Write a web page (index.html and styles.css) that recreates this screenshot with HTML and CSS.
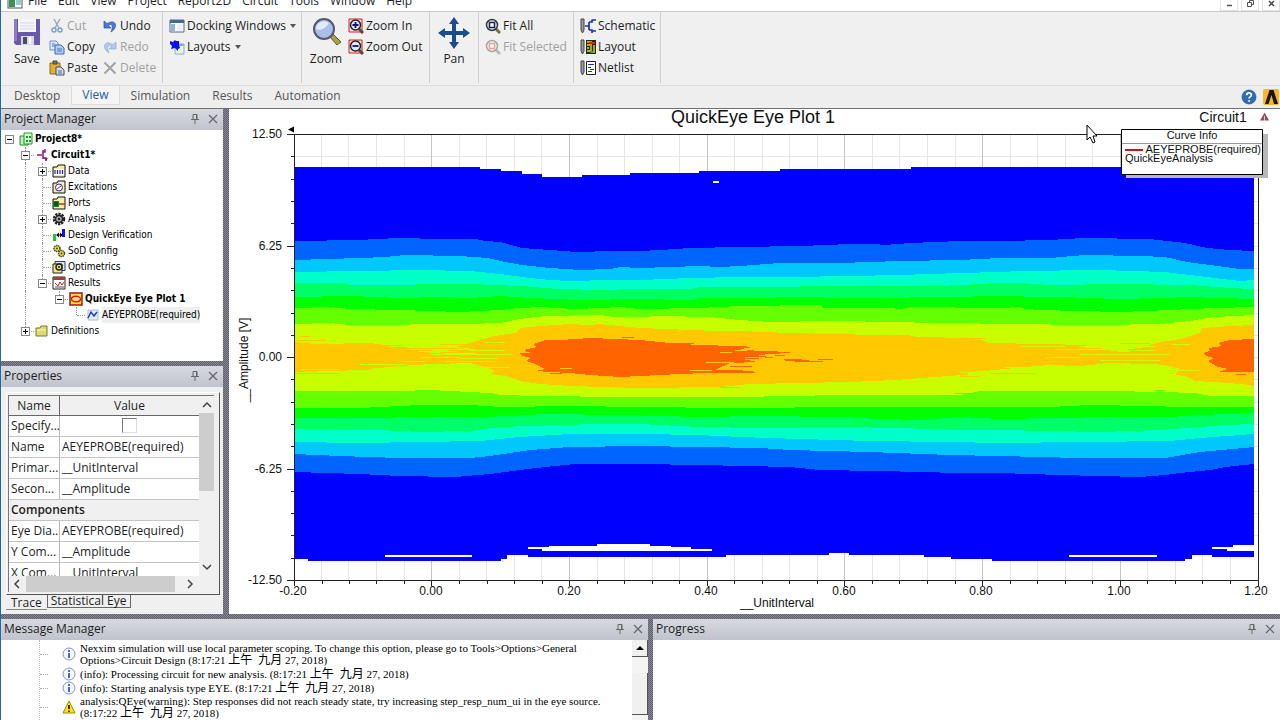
FILE: index.html
```html
<!DOCTYPE html>
<html lang="en">
<head>
<meta charset="utf-8">
<title>QuickEye Eye Plot 1</title>
<link rel="stylesheet" href="styles.css">
</head>
<body>
<svg width="0" height="0" class="defs" aria-hidden="true">
  <symbol id="pin" viewBox="0 0 12 12"><path d="M4 1.500h4v5H4zM2 6.500h8M6 7v4M7.500 2v4" fill="none" stroke="#666"/></symbol>
  <symbol id="close" viewBox="0 0 12 12"><path d="M2 2l8 8M10 2l-8 8" stroke="#666" stroke-width="1.200"/></symbol>
  <symbol id="info" viewBox="0 0 14 14"><circle cx="7" cy="7" r="6" fill="#f4f8ff" stroke="#8297c0"/><path d="M7 6v5M7 3v2" stroke="#2342b8" stroke-width="1.600"/></symbol>
  <symbol id="pen" viewBox="0 0 16 16"><path d="M1 1h3v11l-1.500 3L1 12z" fill="#999" stroke="#444"/></symbol>
  <symbol id="folder" viewBox="0 0 14 14"><path d="M1 3h4l1-2h7v12H1z" fill="#f4f0a8" stroke="#111"/></symbol>
</svg>
<div class="app">
  <header class="menubar">
    <svg class="app-icon" viewBox="0 0 16 16"><rect x="1" y="0" width="14" height="15" fill="#fff" stroke="#555"/><rect x="2" y="3" width="6" height="11" fill="#3d8f5c"/><rect x="9" y="3" width="5" height="9" fill="#9cc"/></svg>
    <nav class="menus">
      <button>File</button><button>Edit</button><button>View</button><button>Project</button><button>Report2D</button><button>Circuit</button><button>Tools</button><button>Window</button><button>Help</button>
    </nav>
    <div class="window-buttons">
      <button aria-label="Minimize"><svg viewBox="0 0 16 16"><path d="M6 12.500h5" stroke="#555" stroke-width="1.500"/></svg></button>
      <button aria-label="Restore"><svg viewBox="0 0 16 16"><path d="M5.500 9.500h4v4h-4zM7.500 9V7.500h4v4H10" fill="none" stroke="#555"/></svg></button>
      <button aria-label="Close"><svg viewBox="0 0 16 16"><path d="M6 8l5 5M11 8l-5 5" stroke="#444" stroke-width="1.500"/></svg></button>
    </div>
  </header>

  <div class="ribbon">
    <section class="group group-edit">
      <button class="big"><svg class="i28" viewBox="0 0 28 28"><path d="M1 1h26v26H3l-2-2z" fill="#6c58a8"/><path d="M5 1h18v13H5z" fill="#f6f6fa"/><path d="M7 5h14M7 8h14M7 11h14" stroke="#d5d5dd"/><path d="M1 1h3v22H1z" fill="#8c7cc0"/><path d="M8 18h13v9H8z" fill="#d9d9e2"/><path d="M10 19h4v7h-4z" fill="#4a4a78"/><path d="M16 19h2v7h-2z" fill="#fff"/></svg><span>Save</span></button>
      <div class="stack stack-a">
        <button class="cmd" disabled><svg class="i16" viewBox="0 0 16 16"><path d="M5 1l5 9M11 1L6 10" stroke="#9aa9bd" stroke-width="1.500"/><circle cx="5" cy="12" r="2" fill="none" stroke="#7f9fd0" stroke-width="1.500"/><circle cx="11" cy="12" r="2" fill="none" stroke="#7f9fd0" stroke-width="1.500"/></svg>Cut</button>
        <button class="cmd"><svg class="i16" viewBox="0 0 16 16"><path d="M1 2h6l2 2v7H1z" fill="#dfe9fa" stroke="#6d8fc9"/><path d="M6 6h6l3 3v6H6z" fill="#b4cdf2" stroke="#3f66ad"/><path d="M8 10h5M8 12h5M3 5h3M3 7h3" stroke="#4a74bd"/></svg>Copy</button>
        <button class="cmd"><svg class="i16" viewBox="0 0 16 16"><path d="M1 3h10v11H1z" fill="#e0b030" stroke="#8a6a20"/><path d="M4 1h4v3H4z" fill="#777" stroke="#444"/><path d="M7 7h5l3 3v5H7z" fill="#cfdcf0" stroke="#444f70"/><path d="M9 11h4M9 13h4" stroke="#667"/></svg>Paste</button>
      </div>
      <div class="stack">
        <button class="cmd"><svg class="i16" viewBox="0 0 16 16"><path d="M2 3v7h7L6.500 7.500C9 5 12 7 9 14c7-4 6-14-4-8.500z" fill="#4a7ad6" stroke="#274f9e" stroke-width=".7"/></svg>Undo</button>
        <button class="cmd" disabled><svg class="i16" viewBox="0 0 16 16"><path d="M14 3v7H7l2.500-2.500C7 5 4 7 7 14 0 10 1 0 11 5.500z" fill="#b4c9e8" stroke="#91abd0" stroke-width=".7"/></svg>Redo</button>
        <button class="cmd" disabled><svg class="i16" viewBox="0 0 16 16"><path d="M2.500 2.500l11 11M13.500 2.500l-11 11" stroke="#a2a2a2" stroke-width="2"/></svg>Delete</button>
      </div>
    </section>
    <section class="group group-windows">
      <div class="stack">
        <button class="cmd"><svg class="i16" viewBox="0 0 16 16"><path d="M1 2h14v12H1z" fill="#fff" stroke="#546a80"/><path d="M1 2h14v3H1z" fill="#3f6a94"/><path d="M2 6h4v7H2z" fill="#8db4dc"/><path d="M8 6h6v7H8z" fill="#e9f0f6"/></svg>Docking Windows<i class="drop"></i></button>
        <button class="cmd"><svg class="i16" viewBox="0 0 16 16"><path d="M6 5h9v10H6z" fill="#e8f0fa" stroke="#9ab"/><path d="M6 5h9v2H6z" fill="#7fb0d8"/><path d="M1 2l3 1 2-2 1 1h3v4l1 3-2 1v2L6 9 2 10l1-3-2-2z" fill="#0a10f0"/></svg>Layouts<i class="drop"></i></button>
      </div>
    </section>
    <section class="group group-zoom">
      <button class="big"><svg class="i32" viewBox="0 0 32 32"><path d="M20 20l7 8 4-3-8-8z" fill="#a8a04c" stroke="#5e5a30"/><circle cx="14" cy="12" r="10" fill="#a9c0ec" stroke="#55586a" stroke-width="2"/><path d="M6 12a8 8 0 0 1 13-6C15 12 11 14 6 12z" fill="#e2ebfb"/></svg><span>Zoom</span></button>
      <div class="stack">
        <button class="cmd"><svg class="i16" viewBox="0 0 16 16"><path d="M1 1h13v13H1z" fill="#f4dfe0" stroke="#c22"/><path d="M11 11l4 4" stroke="#554f30" stroke-width="3"/><circle cx="7.500" cy="7" r="5" fill="#e4e8ff" stroke="#222" stroke-width="1.500"/><path d="M4.500 7h6M7.500 4v6" stroke="#118" stroke-width="1.800"/></svg>Zoom In</button>
        <button class="cmd"><svg class="i16" viewBox="0 0 16 16"><path d="M1 1h13v13H1z" fill="#f4dfe0" stroke="#c22"/><path d="M11 11l4 4" stroke="#554f30" stroke-width="3"/><circle cx="7.500" cy="7" r="5" fill="#e4e8ff" stroke="#222" stroke-width="1.500"/><path d="M4.500 7h6" stroke="#118" stroke-width="1.800"/></svg>Zoom Out</button>
      </div>
    </section>
    <section class="group group-pan">
      <button class="big"><svg class="i32" viewBox="0 0 32 32"><path d="M16 0l5 7h-3v7h7v-3l7 5-7 5v-3h-7v7h3l-5 7-5-7h3v-7H7v3l-7-5 7-5v3h7V7h-3z" fill="#1b4d8c"/></svg><span>Pan</span></button>
    </section>
    <section class="group group-fit">
      <div class="stack">
        <button class="cmd"><svg class="i16" viewBox="0 0 16 16"><path d="M10 10l5 5" stroke="#77703c" stroke-width="3"/><circle cx="7" cy="7" r="5.500" fill="#dfe6f6" stroke="#333a4a" stroke-width="1.500"/><path d="M4.500 4.500h5v5h-5z" fill="#fff" stroke="#224" stroke-width="1.500"/></svg>Fit All</button>
        <button class="cmd" disabled><svg class="i16" viewBox="0 0 16 16"><path d="M10 10l5 5" stroke="#bbb" stroke-width="3"/><circle cx="7" cy="7" r="5.500" fill="#f1f1f1" stroke="#a5a5a5" stroke-width="1.500"/><path d="M4.500 4.500h5v5h-5z" fill="#fff" stroke="#e6a0a0" stroke-width="1.500"/></svg>Fit Selected</button>
      </div>
    </section>
    <section class="group group-views">
      <div class="stack">
        <button class="cmd"><svg class="i16" viewBox="0 0 16 16"><use href="#pen"/><path d="M5 8h4M9 4v8M9 4h3V1.500M9 12h3v3M12 2h4M12 13h4" fill="none" stroke="#2030b0" stroke-width="1.700"/></svg>Schematic</button>
        <button class="cmd"><svg class="i16" viewBox="0 0 16 16"><path d="M6 1h10v14H6z" fill="#222a10"/><path d="M7 3h3M7 6h3M7 9h2M7 12h4" stroke="#f0e020" stroke-width="1.500"/><path d="M11 2v12M14 6v8" stroke="#d8d020" stroke-width="1.500"/><path d="M9 3h6v2H9z" fill="#e02020"/><path d="M10 12h3v2h-3z" fill="#20b020"/><use href="#pen"/></svg>Layout</button>
        <button class="cmd"><svg class="i16" viewBox="0 0 16 16"><path d="M6.500 1.500h9v13h-9z" fill="#fff" stroke="#223"/><path d="M8 4.500h6M8 7.500h3M10 9.500h4M8 11.500h4" stroke="#2030b0"/><use href="#pen"/></svg>Netlist</button>
      </div>
    </section>
  </div>

  <div class="tabrow">
    <nav class="tabs">
      <button>Desktop</button><button class="active">View</button><button>Simulation</button><button>Results</button><button>Automation</button>
    </nav>
    <div class="tabrow-icons">
      <svg class="i16" viewBox="0 0 16 16"><circle cx="8" cy="8" r="7" fill="#2f6db5" stroke="#1f4f8a" stroke-width=".7"/><path d="M5.700 6.200c0-3 4.700-3 4.700-.2 0 1.700-2.300 1.700-2.300 3.500M8.100 11v1.700" fill="none" stroke="#fff" stroke-width="1.700"/></svg>
      <svg class="i16" viewBox="0 0 16 16"><rect x="0" y="0" width="16" height="16" rx="2" fill="#f6b81c"/><path d="M2 15L6.500 1h4L15 15h-4L8.500 6 5.500 15z" fill="#151515"/></svg>
    </div>
  </div>

  <main class="work">
    <aside class="side">
      <section class="project">
        <header class="panel-head"><h2>Project Manager</h2>
          <button aria-label="Pin"><svg class="i12"><use href="#pin"/></svg></button>
          <button aria-label="Close"><svg class="i12"><use href="#close"/></svg></button>
        </header>
        <ul class="tree">
          <li><b class="cell"><i class="box"></i></b><svg class="ti" viewBox="0 0 14 14"><path d="M1 4h8v9H1z" fill="#bff0bf" stroke="#179a2a"/><path d="M5 1h8v11H5z" fill="#d9f8d9" stroke="#179a2a"/><path d="M7 4h2v2H7zM10 4h2v2h-2zM7 8h2v2H7zM10 8h2v2h-2z" fill="#179a2a"/></svg><strong>Project8*</strong></li>
          <li><b class="cell gap"></b><b class="cell line"><i class="box"></i></b><svg class="ti" viewBox="0 0 14 14"><path d="M2 7h5M8 2v9M10 1v3H8M8 10h3v3" fill="none" stroke="#8a1a8a" stroke-width="1.500"/><path d="M9 10h4l-2 3z" fill="#8a1a8a"/></svg><strong>Circuit1*</strong></li>
          <li><b class="cell gap"></b><b class="cell v"></b><b class="cell line"><i class="box plus"></i></b><svg class="ti" viewBox="0 0 14 14"><use href="#folder"/><path d="M2 5h10v6H2z" fill="#fff"/><path d="M3 6v4M5.500 6v4M8 6v4M10.500 6v4" stroke="#22c" stroke-width="1.200"/></svg><span>Data</span></li>
          <li><b class="cell gap"></b><b class="cell v"></b><b class="cell line"></b><svg class="ti" viewBox="0 0 14 14"><use href="#folder"/><circle cx="7" cy="7.500" r="3.500" fill="#fff" stroke="#22c"/><path d="M5 9l4-3" stroke="#c22"/></svg><span>Excitations</span></li>
          <li><b class="cell gap"></b><b class="cell v"></b><b class="cell line"></b><svg class="ti" viewBox="0 0 14 14"><use href="#folder"/><path d="M1 5h6v6H1z" fill="#108a20"/><path d="M3 6v4M5 6v4" stroke="#021"/><path d="M7 8h6" stroke="#d22" stroke-width="1.500"/></svg><span>Ports</span></li>
          <li><b class="cell gap"></b><b class="cell v"></b><b class="cell line"><i class="box plus"></i></b><svg class="ti" viewBox="0 0 14 14"><circle cx="7" cy="7" r="5" fill="none" stroke="#222" stroke-width="2.500" stroke-dasharray="2.200 1"/><circle cx="7" cy="7" r="3.500" fill="#aaa" stroke="#222" stroke-width="1.500"/><circle cx="7" cy="7" r="1.200" fill="#222"/></svg><span>Analysis</span></li>
          <li><b class="cell gap"></b><b class="cell v"></b><b class="cell line"></b><svg class="ti" viewBox="0 0 14 14"><path d="M1 6h3v7H1z" fill="#1bc83a"/><path d="M10 1h3v8h-3z" fill="#1212e0"/><path d="M4 7l3-2.500v5zM11 7L8 4.500v5z" fill="#111"/><path d="M5 7h5" stroke="#111"/></svg><span>Design Verification</span></li>
          <li><b class="cell gap"></b><b class="cell v"></b><b class="cell line"></b><svg class="ti" viewBox="0 0 14 14"><circle cx="5" cy="4.500" r="3" fill="#ece63a" stroke="#443" stroke-width="1.500" stroke-dasharray="1.500 .6"/><circle cx="9.500" cy="9.500" r="3" fill="#ece63a" stroke="#443" stroke-width="1.500" stroke-dasharray="1.500 .6"/><circle cx="5" cy="4.500" r="1" fill="#443"/><circle cx="9.500" cy="9.500" r="1" fill="#443"/></svg><span>SoD Config</span></li>
          <li><b class="cell gap"></b><b class="cell v"></b><b class="cell line"></b><svg class="ti" viewBox="0 0 14 14"><path d="M3 1.500h10v9H3z" fill="#dde6ff" stroke="#223a9a"/><path d="M1 4h9v9H1z" fill="#f2ee70" stroke="#222"/><circle cx="7" cy="7" r="3" fill="#ece63a" stroke="#222" stroke-width="1.500"/><circle cx="7" cy="7" r="1" fill="#222"/></svg><span>Optimetrics</span></li>
          <li><b class="cell gap"></b><b class="cell v"></b><b class="cell line end"><i class="box"></i></b><svg class="ti" viewBox="0 0 14 14"><path d="M1 1h12v12H1z" fill="#fff" stroke="#222"/><path d="M1 1h12v3H1z" fill="#b33"/><path d="M3 7l3 3 2-4 2 3 2-3" fill="none" stroke="#d22"/><path d="M3 11h9" stroke="#555"/></svg><span>Results</span></li>
          <li><b class="cell gap"></b><b class="cell v"></b><b class="cell"></b><b class="cell line end"><i class="box"></i></b><svg class="ti" viewBox="0 0 14 14"><path d="M1 1h12v12H1z" fill="#f8e838" stroke="#a31616" stroke-width="1.500"/><ellipse cx="7" cy="7" rx="4.500" ry="2.800" fill="#ffd27a" stroke="#d21c1c" stroke-width="1.400"/></svg><strong>QuickEye Eye Plot 1</strong></li>
          <li><b class="cell gap"></b><b class="cell v"></b><b class="cell"></b><b class="cell"></b><b class="cell line end"></b><svg class="ti" viewBox="0 0 14 14"><path d="M2 2h10v10H2z" fill="#e4eefc" stroke="#a9bdd8"/><path d="M2 10l3-6 3 4 3-4" fill="none" stroke="#1c38c0" stroke-width="1.400"/></svg><span class="selected">AEYEPROBE(required)</span></li>
          <li><b class="cell gap"></b><b class="cell line end"><i class="box plus"></i></b><svg class="ti" viewBox="0 0 14 14"><path d="M1 4h4l1-2h6v10H1z" fill="#dcdc6c" stroke="#77772c"/><path d="M2 6h9" stroke="#f8f8c0"/></svg><span>Definitions</span></li>
        </ul>
      </section>
      <div class="split-h"></div>
      <section class="properties">
        <header class="panel-head"><h2>Properties</h2>
          <button aria-label="Pin"><svg class="i12"><use href="#pin"/></svg></button>
          <button aria-label="Close"><svg class="i12"><use href="#close"/></svg></button>
        </header>
        <div class="prop-frame">
          <div class="prop-grid">
            <div class="prop-view">
              <table>
                <thead><tr><th>Name</th><th>Value</th></tr></thead>
                <tbody>
                  <tr><td><label for="specify">Specify...</label></td><td class="center"><input id="specify" type="checkbox"></td></tr>
                  <tr><td>Name</td><td>AEYEPROBE(required)</td></tr>
                  <tr><td>Primar...</td><td>__UnitInterval</td></tr>
                  <tr><td>Secon...</td><td>__Amplitude</td></tr>
                  <tr><th colspan="2" class="section">Components</th></tr>
                  <tr><td>Eye Dia...</td><td>AEYEPROBE(required)</td></tr>
                  <tr><td>Y Com...</td><td>__Amplitude</td></tr>
                  <tr><td>X Com...</td><td>__UnitInterval</td></tr>
                </tbody>
              </table>
            </div>
            <div class="vbar"><svg class="i12" viewBox="0 0 12 12"><path d="M2 8l4-4 4 4" fill="none" stroke="#444" stroke-width="1.500"/></svg><i class="vthumb"></i><svg class="i12" viewBox="0 0 12 12"><path d="M2 4l4 4 4-4" fill="none" stroke="#444" stroke-width="1.500"/></svg></div>
            <div class="hbar"><svg class="i12" viewBox="0 0 12 12"><path d="M8 2L4 6l4 4" fill="none" stroke="#444" stroke-width="1.500"/></svg><i class="hthumb"></i><svg class="i12" viewBox="0 0 12 12"><path d="M4 2l4 4-4 4" fill="none" stroke="#444" stroke-width="1.500"/></svg></div>
          </div>
        </div>
        <nav class="sheet-tabs"><button>Trace</button><button class="boxed">Statistical Eye</button></nav>
      </section>
    </aside>
    <div class="split-v wide"></div>
    <section class="plot">
      <svg class="chart" viewBox="229 109 1051 505" role="img" aria-label="QuickEye Eye Plot 1">
        <g class="grid">
          <path class="minor" d="M294 156.500H1258M321.500 135V580M348.500 135V580M376.500 135V580M404.500 135V580M459.500 135V580M486.500 135V580M514.500 135V580M541.500 135V580M597.500 135V580M624.500 135V580M652.500 135V580M679.500 135V580M734.500 135V580M762.500 135V580M789.500 135V580M817.500 135V580M872.500 135V580M899.500 135V580M927.500 135V580M955.500 135V580M1010.500 135V580M1037.500 135V580M1065.500 135V580M1092.500 135V580M1147.500 135V580M1175.500 135V580M1202.500 135V580M1230.500 135V580M1254 179.500h4M1254 201.500h4M1254 223.500h4M1254 246.500h4M1254 268.500h4M1254 290.500h4M1254 313.500h4M1254 335.500h4M1254 357.500h4M1254 379.500h4M1254 402.500h4M1254 424.500h4M1254 446.500h4M1254 469.500h4M1254 491.500h4M1254 513.500h4M1254 535.500h4"/>
          <path class="major" d="M431.500 135V580M569.500 135V580M707.500 135V580M844.500 135V580M982.500 135V580M1120.500 135V580"/>
        </g>
        <g class="bands">
          <path fill="#0000ff" d="M294 167H480V169H501V171H522V174H542V177H582V175H630V173H699V171H780V169H911V167H1168V169H1190V171H1209V174H1226V177H1254V557H1212V555H1192V559H1185V561H992V559H951V557H924V555H849V553H829V555H726V557H528V555H507V559H501V561H308V559H294Z"/>
          <path fill="#0064ff" d="M294 241L360 240 375 239 400 238 440 239 475 239 485 241 500 242 515 246 522 248 550 250 577 252 613 251 640 251 660 250 690 248 740 247 800 246 850 244 875 244 885 245 910 243 960 241 1000 241 1050 240 1083 238 1150 239 1185 243 1207 248 1230 250 1254 251V464L1225 467 1210 470 1180 473 1165 475 1140 477 1060 475 1000 473 960 473 880 471 820 470 790 467 700 465 640 464 575 464 545 467 520 470 490 474 455 477 400 476 360 474 294 472Z"/>
          <path fill="#00c8ff" d="M294 260L360 258 385 257 405 255 460 256 488 258 505 262 522 265 550 268 580 270 610 269 620 267 640 268 700 266 720 267 740 266 780 263 840 263 900 261 960 260 1000 258 1050 258 1085 255 1140 256 1165 257 1187 262 1210 265 1240 269 1254 269V447L1200 452 1165 458 1080 458 1000 456 950 455 870 452 790 450 760 448 700 447 640 446 570 447 530 450 490 456 470 458 400 458 340 456 294 454Z"/>
          <path fill="#00ffc8" d="M294 272L360 271 420 270 470 271 500 274 530 278 550 280 570 281 610 280 640 280 690 278 740 277 790 277 850 276 900 275 960 273 1000 272 1020 271 1100 270 1165 272 1190 275 1215 278 1240 281 1254 280V434L1200 438 1170 441 1000 443 950 442 870 441 800 439 740 437 700 435 640 434 570 434 520 437 480 441 360 443 294 442Z"/>
          <path fill="#00ff64" d="M294 283L345 283 350 285 400 285 430 284 470 284 520 286 560 289 600 290 640 289 690 289 700 287 760 287 840 286 940 286 1000 283 1020 283 1050 285 1120 284 1190 285 1230 288 1254 289V424L1225 425 1200 427 1160 430 1100 432 1000 430 960 430 900 428 840 427 760 428 700 427 640 424 600 424 560 425 500 427 470 431 420 432 380 430 294 429Z"/>
          <path fill="#00ff00" d="M294 297L350 296 400 298 440 297 470 298 500 296 530 298 580 300 640 299 690 300 700 298 760 298 790 297 860 298 960 297 985 296 1060 297 1120 299 1160 298 1190 297 1254 299V413L1200 415 1170 417 1110 417 1060 418 1000 419 960 417 920 420 880 419 840 417 760 416 700 417 620 415 545 414 510 416 480 417 420 417 370 418 294 418Z"/>
          <path fill="#64ff00" d="M294 308L330 307 350 309 400 310 460 312 500 310 520 308 540 307 575 309 600 308 620 307 640 309 700 308 740 306 820 305 824 308 890 308 900 309 910 307 1000 308 1020 307 1025 309 1040 310 1120 312 1170 310 1215 308 1254 307V407L1180 407 1150 406 1090 405 1050 407 960 407 860 407 730 408 640 407 570 406 500 407 470 405 420 405 360 408 294 408Z"/>
          <path fill="#c8ff00" d="M294 324L330 323 350 325 470 324 500 323 520 319 545 316 600 315 615 317 640 317 660 316 710 317 740 320 770 322 830 321 860 321 870 322 960 323 1000 324 1100 325 1160 324 1190 321 1215 317 1254 315V396L1210 396 1195 393 1160 392 1110 391 1000 391 980 391 960 395 870 395 840 395 790 396 740 397 690 397 620 397 540 396 500 395 490 393 470 392 430 390 400 391 294 391Z"/>
          <path fill="#ffc800" d="M294 342L315 344 370 343 385 345 420 346 400 347 440 350 410 352 450 353 425 355 480 354 445 350 475 349 455 347 470 343 478 340 500 335 515 333 520 328 540 326 570 324 590 325 600 324 640 328 690 330 720 331 740 331 790 333 840 334 900 336 960 338 980 340 990 343 1040 344 1090 345 1075 347 1110 349 1120 352 1095 352 1135 353 1125 350 1145 347 1155 343 1180 339 1200 333 1202 328 1230 326 1254 325V386L1240 384 1215 382 1195 381 1185 376 1175 375 1180 369 1168 366 1155 364 1105 363 1100 364 1080 366 1050 365 1025 367 995 370 960 373 975 374 935 377 895 380 850 382 750 384 720 387 640 388 570 386 540 384 520 381 505 376 490 374 495 371 485 367 470 363 430 364 400 366 380 368 340 371 294 372Z"/>
          <path fill="#ff6400" d="M519 353L527 352 524 350 537 347 533 344 545 340 560 340 590 338 640 340 670 343 695 343 690 345 745 346 752 348 735 349 760 351 795 352 775 354 755 355 776 358 742 359 758 362 730 363 715 370 770 371 705 373 680 374 640 376 620 377 590 375 570 373 550 372 535 371 545 369 533 363 526 361 531 358 523 356Z"/>
          <path fill="#ff6400" d="M1203 353L1210 351 1209 348 1222 346 1218 343 1230 340 1254 339V372H1218L1228 369 1218 367 1208 361 1214 358 1206 356Z"/>
        </g>
        <g class="streaks">
          <path stroke="#c8ff00" d="M390 346h50M410 349h65M420 357h40M445 361h50M400 361h25M432 354h80M470 350h35M460 358h38M300 369h60M360 364h45M960 372h40M1020 346h45M1055 349h60M1080 354h90M1045 357h35M1110 350h45M1100 360h60M1120 346h35M1005 367h40M480 367h30M1175 370h24M485 342h20M1172 344h18"/>
          <path stroke="#ffc800" d="M300 336h10M296 340h30M380 348h80M440 352h90M400 356h70M425 359h80M294 373h45M340 369h30M885 335h25M965 338h20M720 387h20M990 373h45M1000 348h90M1070 352h90M1090 358h70M440 344h30M1120 343h30M960 376h20"/>
          <path stroke="#ff6400" d="M775 355h10M784 359h18M795 361h28M818 359h15M785 360h24M622 337h12M550 373h12M1236 374h10M730 366h22M700 372h55"/>
          <path stroke="#ffc800" d="M560 368h12M720 352h12M706 362h28M745 357h20M690 370h22M735 350h12"/>
          <path stroke="#64ff00" d="M955 393h26M326 391h20M1155 390h10M685 405h10M738 406h10"/>
        </g>
        <g fill="#fff">
          <path d="M385 555H472V557H385ZM1069 555H1157V557H1069ZM713 181H719V183H713Z"/>
          <path d="M528 547H549V546H597V544H650V546H671V547H691V549H712V551H542V549H528Z"/>
          <path d="M1212 547H1233V545H1254V551H1227V549H1212Z"/>
        </g>
        <path class="axis" d="M287 134.500H1258.500V586M287 580.500H1258.500M294.500 134V586M287 246.500h7M287 357.500h7M287 469.500h7M291 156.500h3M291 179.500h3M291 201.500h3M291 223.500h3M291 268.500h3M291 290.500h3M291 313.500h3M291 335.500h3M291 379.500h3M291 402.500h3M291 424.500h3M291 446.500h3M291 491.500h3M291 513.500h3M291 535.500h3M291 558.500h3M322.500 580v4M349.500 580v4M376.500 580v4M404.500 580v4M431.500 580v6M459.500 580v4M487.500 580v4M514.500 580v4M542.500 580v4M569.500 580v6M597.500 580v4M624.500 580v4M652.500 580v4M679.500 580v4M707.500 580v6M734.500 580v4M762.500 580v4M789.500 580v4M817.500 580v4M844.500 580v6M872.500 580v4M899.500 580v4M927.500 580v4M955.500 580v4M982.500 580v6M1010.500 580v4M1037.500 580v4M1065.500 580v4M1092.500 580v4M1120.500 580v6M1147.500 580v4M1175.500 580v4M1202.500 580v4M1230.500 580v4"/>
        <path d="M288 129.500l6-3v6z" fill="#000"/>
        <g class="tick" text-anchor="end"><text x="282" y="138">12.50</text><text x="282" y="250">6.25</text><text x="282" y="361">0.00</text><text x="282" y="473">-6.25</text><text x="282" y="584">-12.50</text></g>
        <g class="tick" text-anchor="middle"><text x="293" y="595">-0.20</text><text x="431" y="595">0.00</text><text x="569" y="595">0.20</text><text x="706" y="595">0.40</text><text x="844" y="595">0.60</text><text x="981" y="595">0.80</text><text x="1119" y="595">1.00</text><text x="1256" y="595">1.20</text><text x="777" y="607">__UnitInterval</text><text transform="translate(248 360) rotate(-90)">__Amplitude [V]</text></g>
        <text class="title" x="753" y="123" text-anchor="middle">QuickEye Eye Plot 1</text>
        <text class="design" x="1223" y="122" text-anchor="middle">Circuit1</text>
        <path d="M1260 120.500l4.500-8 4.500 8z" fill="#a04a50"/><path d="M1264.500 116v5" stroke="#e8c8c8"/>
        <g class="legend">
          <path d="M1126 134h142v44h-142z" fill="#b8b8b8"/>
          <path d="M1121.500 129.500h141v45h-141z" fill="#fff" stroke="#000"/>
          <path d="M1122 143.500h140" stroke="#999"/>
          <path d="M1125 150h18" stroke="#c81414" stroke-width="2"/>
          <text x="1192" y="139" text-anchor="middle">Curve Info</text>
          <text x="1261" y="153" text-anchor="end">AEYEPROBE(required)</text>
          <text x="1125" y="162">QuickEyeAnalysis</text>
        </g>
        <path d="M1087 125v15l3-3 3 6 2-1-2-6h4z" fill="#fff" stroke="#000"/>
      </svg>
    </section>
  </main>
  <div class="split-h"></div>
  <footer class="bottom">
    <section class="messages">
      <header class="panel-head"><h2>Message Manager</h2>
        <button aria-label="Pin"><svg class="i12"><use href="#pin"/></svg></button>
        <button aria-label="Close"><svg class="i12"><use href="#close"/></svg></button>
      </header>
      <div class="msg-body">
        <ul class="msg-list">
          <li class="two"><svg class="i14"><use href="#info"/></svg><p>Nexxim simulation will use local parameter scoping. To change this option, please go to Tools&gt;Options&gt;General<br>Options&gt;Circuit Design (8:17:21 <span lang="zh-TW">上午&nbsp; 九月</span> 27, 2018)</p></li>
          <li><svg class="i14"><use href="#info"/></svg><p>(info): Processing circuit for new analysis. (8:17:21 <span lang="zh-TW">上午&nbsp; 九月</span> 27, 2018)</p></li>
          <li><svg class="i14"><use href="#info"/></svg><p>(info): Starting analysis type EYE. (8:17:21 <span lang="zh-TW">上午&nbsp; 九月</span> 27, 2018)</p></li>
          <li class="two"><svg class="i14" viewBox="0 0 14 14"><path d="M7 1l6 12H1z" fill="#ffe21a" stroke="#a08a10"/><path d="M7 5v4M7 10.500v1.500" stroke="#111" stroke-width="1.600"/></svg><p>analysis:QEye(warning): Step responses did not reach steady state, try increasing step_resp_num_ui in the eye source.<br>(8:17:22 <span lang="zh-TW">上午&nbsp; 九月</span> 27, 2018)</p></li>
        </ul>
        <div class="msg-bar"><button aria-label="Scroll up"><svg class="i12" viewBox="0 0 12 12"><path d="M2 8l4-4 4 4z" fill="#000"/></svg></button><i></i><b></b></div>
      </div>
    </section>
    <div class="split-v"></div>
    <section class="progress">
      <header class="panel-head"><h2>Progress</h2>
        <button aria-label="Pin"><svg class="i12"><use href="#pin"/></svg></button>
        <button aria-label="Close"><svg class="i12"><use href="#close"/></svg></button>
      </header>
    </section>
  </footer>
</div>
</body>
</html>
```
FILE: styles.css
```css
* { box-sizing: border-box; }
html, body { height: 100%; }
body {
  margin: 0;
  overflow: hidden;
  background: #fff;
  color: #1e1e1e;
  font: 12px/16px "Open Sans", "Noto Sans", sans-serif;
}
button {
  margin: 0;
  padding: 0;
  border: 0;
  background: none;
  color: inherit;
  font: inherit;
  white-space: nowrap;
}
svg { display: block; flex: none; }
.defs { position: absolute; }
ul, p, h2 { margin: 0; padding: 0; list-style: none; }
.i12 { width: 12px; height: 12px; }
.i14 { width: 14px; height: 14px; }
.i16 { width: 16px; height: 16px; }
.i28 { width: 28px; height: 28px; }
.i32 { width: 32px; height: 32px; }

.app {
  display: flex;
  flex-direction: column;
  height: 100vh;
  border-left: 1px solid #1f6aa5;
}

.menubar {
  display: flex;
  align-items: center;
  flex: none;
  height: 22px;
  margin-top: -10px;
  padding-left: 6px;
  background: #fff;
  border-bottom: 1px solid #c8c8c8;
}
.app-icon { width: 16px; height: 16px; margin-right: 5px; }
.menus { display: flex; flex: 1; gap: 11px; }
.window-buttons { display: flex; align-self: stretch; gap: 3px; }
.window-buttons svg { width: 16px; height: 16px; }
.window-buttons button { border: 1px solid #e4e4e4; }

.ribbon {
  display: flex;
  flex: none;
  height: 74px;
  padding-left: 2px;
  background: #f0f0f1;
  border-bottom: 1px solid #dcdcdc;
}
.group {
  display: flex;
  align-items: flex-start;
  margin-bottom: 2px;
  padding: 3px 0 0 8px;
  border-right: 1px solid #cfcfd2;
}
.group-edit { width: 160px; }
.group-windows { width: 139px; padding-left: 6px; }
.group-zoom { width: 128px; }
.group-pan { width: 49px; }
.group-fit { width: 95px; padding-left: 6px; }
.group-views { width: 87px; padding-left: 6px; }
.big {
  display: flex;
  flex-direction: column;
  align-items: center;
  justify-content: space-between;
  width: 32px;
  height: 50px;
  margin-top: 2px;
}
.big .i28 { margin-top: 1px; }
.stack { display: flex; flex-direction: column; }
.stack-a { width: 53px; }
.group-edit .stack-a { margin-left: 6px; }
.group-zoom .stack { margin-left: 6px; }
.cmd { display: flex; align-items: center; gap: 2px; height: 21px; }
.cmd:disabled { color: #a0a0a0; }
.drop {
  margin-left: 2px;
  border: 3px solid transparent;
  border-top: 4px solid #555;
  border-bottom: 0;
}

.tabrow {
  display: flex;
  flex: none;
  justify-content: space-between;
  height: 23px;
  background: #eeeeef;
  border-bottom: 1px solid #707070;
  color: #555;
}
.tabs { display: flex; height: 19px; padding-left: 2px; }
.tabs button { padding: 0 11px; }
.tabs .active { background: #f5f5f6; border: 1px solid #dcdcdc; border-top: 0; color: #2560a0; padding: 0 10px; }
.tabrow-icons { display: flex; gap: 6px; padding: 3px 1px 0 0; }

.work { display: flex; flex: 1; min-height: 0; }
.side { display: flex; flex-direction: column; flex: none; width: 222px; }
.split-v, .split-h {
  flex: none;
  background: repeating-conic-gradient(#5e5e6a 0 25%, #8a8a96 0 50%) 0 0 / 2px 2px;
}
.split-v { width: 5px; }
.split-v.wide { width: 6px; }
.split-h { height: 5px; }

.panel-head {
  display: flex;
  align-items: center;
  flex: none;
  gap: 6px;
  height: 21px;
  padding: 0 4px 2px 3px;
  background: linear-gradient(#d8dae2, #c0c3cc);
}
.panel-head h2 { flex: 1; font-size: 12px; font-weight: 400; }

.project { flex: none; height: 252px; }
.tree {
  padding-top: 1px;
  font: 10px/16px "DejaVu Sans Condensed", "DejaVu Sans", sans-serif;
}
.tree li { display: flex; align-items: center; height: 16px; color: #000; }
.cell { position: relative; flex: none; width: 17px; height: 16px; }
.cell.gap { width: 16px; }
.v::before, .line::before {
  content: "";
  position: absolute;
  left: 8px;
  top: 0;
  bottom: 0;
  border-left: 1px dotted #999;
}
.end::before { bottom: 8px; }
.line::after {
  content: "";
  position: absolute;
  left: 9px;
  right: 0;
  top: 8px;
  border-top: 1px dotted #999;
}
.box {
  position: absolute;
  left: 4px;
  top: 4px;
  z-index: 1;
  width: 9px;
  height: 9px;
  border: 1px solid #888;
  background: linear-gradient(#000, #000) center / 5px 1px no-repeat #fff;
}
.plus {
  background: linear-gradient(#000, #000) center / 5px 1px no-repeat, linear-gradient(#000, #000) center / 1px 5px no-repeat #fff;
}
.ti { width: 14px; height: 14px; margin: 0 2px 0 1px; }
.selected { background: #efefef; }

.properties { display: flex; flex: 1; flex-direction: column; min-height: 0; background: #f0f0f0; }
.prop-frame {
  flex: 1;
  min-height: 0;
  margin: 5px 3px 0 5px;
  padding: 2px 5px 2px 1px;
  border: 1px solid #fff;
  border-right: 1px solid #555;
  border-bottom: 1px solid #555;
}
.prop-grid {
  display: grid;
  grid-template: minmax(0, 1fr) 16px / minmax(0, 1fr) 15px;
  height: 100%;
  border: 1px solid #777;
  border-right: 0;
  border-bottom: 0;
}
.prop-view { overflow: hidden; background: #fff; }
table { width: 100%; border-collapse: separate; border-spacing: 0; table-layout: fixed; line-height: 15px; }
th, td {
  height: 21px;
  padding: 0 2px 1px;
  border-bottom: 1px solid #c4c4c4;
  text-align: left;
  font-weight: 400;
  white-space: nowrap;
  overflow: hidden;
}
th:first-child, td:first-child { width: 51px; border-right: 1px solid #bbb; }
thead th, thead th:first-child { height: 20px; background: #f0f0f0; border-color: #666; text-align: center; }
tbody th.section { background: #f0f0f0; border-right: 0; font-weight: 600; }
td.center { text-align: center; }
input[type="checkbox"] {
  appearance: none;
  display: block;
  width: 15px;
  height: 15px;
  margin: 0 auto;
  border: 1px solid #ddd;
  border-top-color: #777;
  border-left-color: #777;
  background: #fff;
}
.vbar { display: flex; flex-direction: column; align-items: center; padding: 3px 0; }
.vthumb { width: 100%; height: 78px; margin: 2px 0 auto; background: #cdcdcd; }
.hbar { grid-column: 1 / 3; display: flex; align-items: center; padding: 0 18px 0 2px; }
.hthumb { width: 149px; height: 100%; margin: 0 auto 0 3px; background: #cdcdcd; }
.sheet-tabs { display: flex; flex: none; height: 19px; padding: 0 5px; }
.sheet-tabs button { height: 15px; padding: 0 5px; border-bottom: 1px solid #888; line-height: 16px; }
.sheet-tabs .boxed { height: 13px; padding: 0 3px; line-height: 12px; border: 1px solid #666; border-top: 0; }

.plot { flex: 1; min-width: 0; background: #fff; }
.chart { width: 100%; height: 100%; font-family: "Liberation Sans", Arial, sans-serif; fill: #111; }
.bands, .streaks { shape-rendering: crispEdges; }
.streaks path { fill: none; stroke-width: 1; }
.minor { fill: none; stroke: #e6e6e6; }
.major { fill: none; stroke: #c4c4c4; }
.axis { fill: none; stroke: #222; shape-rendering: crispEdges; }
.tick { font-size: 12px; }
.title { font-size: 18px; }
.design { font-size: 14px; }
.legend { font-size: 11px; }

.bottom { display: flex; flex: none; height: 101px; }
.messages { display: flex; flex-direction: column; flex: none; width: 647px; min-width: 0; }
.progress { flex: 1; min-width: 0; }
.msg-body { display: flex; flex: 1; min-height: 0; overflow: hidden; }
.msg-list {
  flex: 1;
  margin-left: 38px;
  padding-top: 2px;
  border-left: 1px dotted #bbb;
  font: 11px/14px "Liberation Serif", "Noto Sans CJK TC", serif;
  color: #000;
}
.msg-list li { display: flex; align-items: center; gap: 4px; height: 14px; }
.msg-list li::before { content: ""; width: 8px; border-top: 1px dotted #aaa; margin-right: 10px; }
.msg-list p { white-space: nowrap; }
.msg-list span { font-size: 12px; line-height: 12px; }
.msg-list .two { height: 24px; line-height: 12px; margin-bottom: 1px; }
.msg-bar { display: flex; flex-direction: column; width: 16px; background: #f4f4f4; }
.msg-bar button { display: flex; align-items: center; justify-content: center; height: 17px; border-right: 1px solid #555; border-bottom: 1px solid #555; background: #f0f0f0; }
.msg-bar i { height: 16px; }
.msg-bar b { height: 42px; border-right: 1px solid #555; border-bottom: 1px solid #555; background: #f0f0f0; }
```
